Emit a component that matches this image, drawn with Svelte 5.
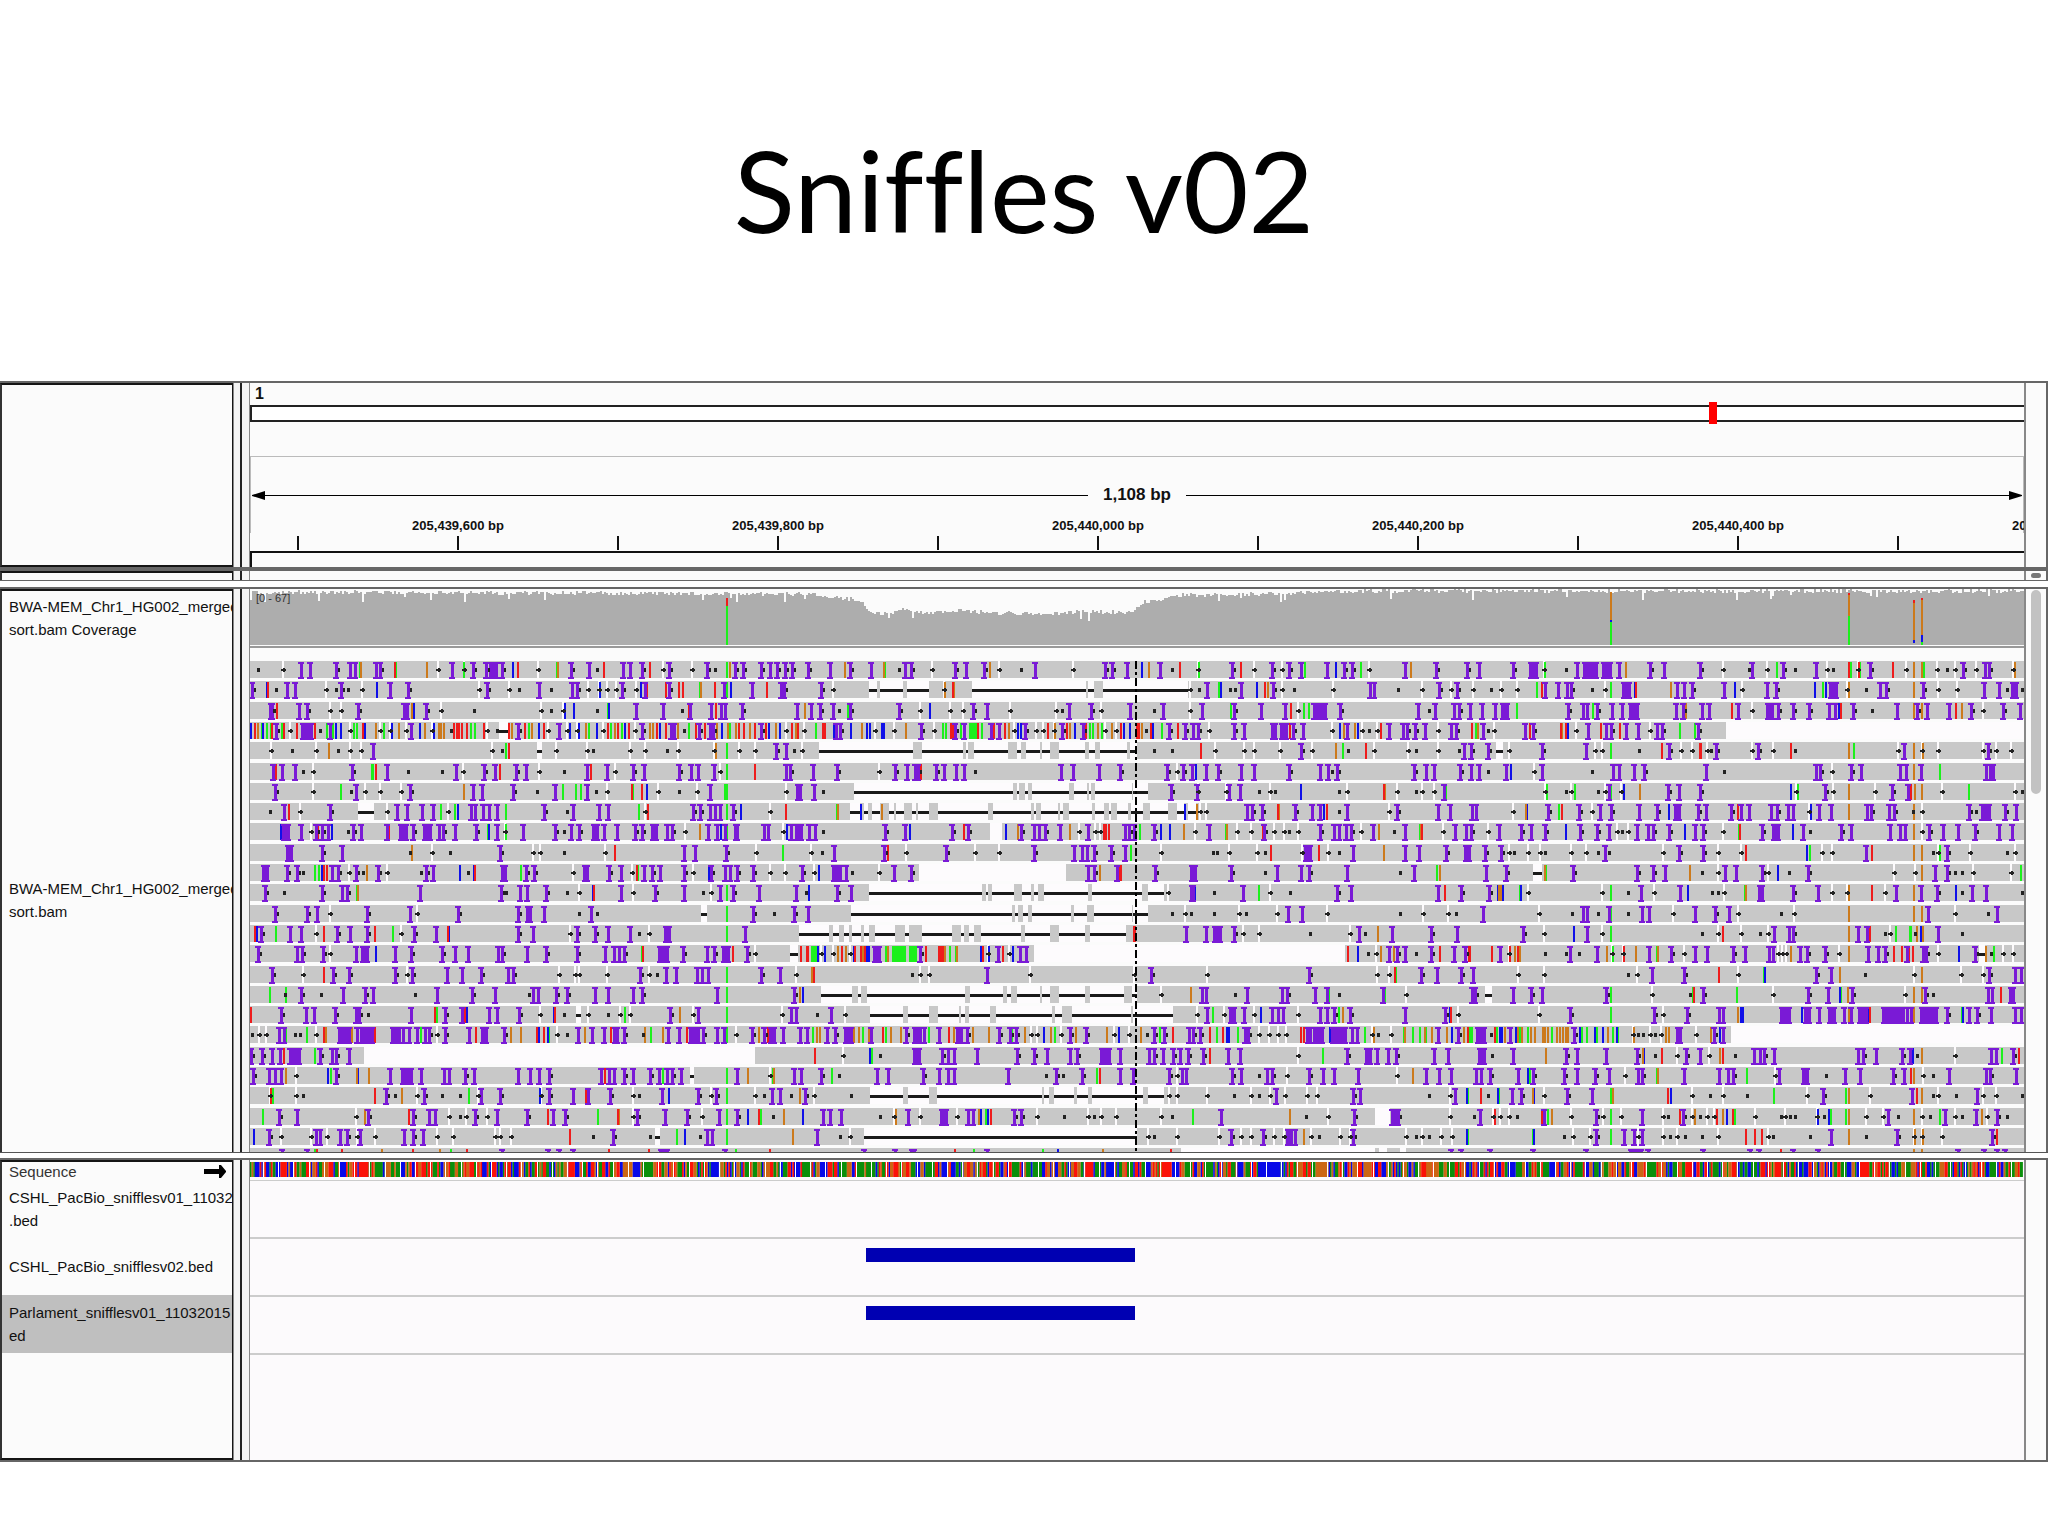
<script lang="ts">
	const WIDTH = 1774;
	const ROW_PITCH = 20.3;

	// One string per packed row of reads, positions in track units.
	// i insertion, f insertion next to a one base gap, b run of insertions, d dot,
	// m short deletion, l long deletion, e no read, a c g t mismatched base
	const rows = [
		'd8 m33 i51 i60 f86 i100 i105 a110 g111 i126 f130 t145 a146 g177 m188 i202 a214 m214 f223 f236 b240-247 f252 c263 t268 m288 a307 g308 f321 i339 d347 t354 i373 i380 f392 t400 m413 f419 m442 f457 d465 a477 g480 f485 f493 f511 i520 f527 f535 f542 f558 i580 g595 f600 i621 a635 g634 d649 i655 f661 m682 f705 i716 f734 g740 m749 d771 i785 m823 f855 f862 i877 c892 g899 i910 d922 t930 m948 a949 f982 t991 m1004 f1022 m1032 f1039 i1051 a1055 i1077 c1086 f1094 f1102 a1111 m1119 i1155 g1161 f1186 f1217 i1229 f1263 b1280-1287 m1294 a1295 d1316 i1327 b1334-1347 b1353-1361 i1369 g1376 f1400 i1414 f1450 m1473 d1499 i1502 m1517 a1527 f1533 d1545 i1566 m1577 d1583 t1599 a1601 m1608 t1609 a1610 f1620 t1643 m1656 g1664 g1672 a1674 m1687 d1697 m1705 f1713 m1726 i1735 f1739 m1763 g1765',
		'f2 c17 t18 d26 i37 i45 m76 d86 f91 d98 m112 c127 i140 f158 m229 f237 m259 d269 i289 d301 i322 f327 m338 c350 m349 m357 m366 f372 m386 c391 i395 t397 t416 f419 t429 t433 a450 g451 t465 i474 a477 c481 i502 t517 i531 f534 f571 m583 l619-627 l630-653 l657-679 m694 g695 t703 g704 l722-836 l838-844 l853-938 m940 d949 i957 a969 c971 d980 d985 i991 c1007 t1015 g1018 f1023 m1032 d1044 m1083 i1120 i1124 d1148 m1172 f1189 m1201 f1207 m1223 d1241 m1251 m1267 a1287 t1292 i1295 i1308 i1317 f1321 d1342 m1355 a1361 b1373-1380 c1385 t1386 g1421 i1427 i1434 f1442 i1474 c1485 m1492 i1517 f1526 c1565 a1573 c1576 b1580-1587 m1597 g1599 d1616 i1630 f1636 g1664 f1673 m1688 m1707 i1734 i1749 d1757 b1762-1767 d1772',
		'b20-23 d24 t27 i49 f57 m80 m91 f108 i154 i157 g162 c164 f176 m191 d224 m291 d301 m313 c315 c324 d347 a358 c359 i386 i413 d432 t439 i440 i461 t466 i471 i475 f492 i547 g555 i561 f570 i583 d589 a598 f600 f649 m670 c680 m700 m713 f723 i737 m760 m806 d812 i819 f841 m851 i880 d904 i913 m940 i952 a981 f984 i1011 i1035 t1041 m1048 a1054 a1059 i1064 b1067-1076 f1090 i1168 d1179 i1185 i1204 f1209 i1220 i1232 i1245 b1252-1258 a1267 f1318 i1333 i1337 a1343 f1347 i1362 i1372 b1380-1388 i1426 f1433 g1436 i1452 i1459 t1482 i1488 m1502 b1517-1523 f1528 f1543 f1559 i1579 i1585 c1589 t1591 f1603 d1622 i1647 g1664 f1667 g1672 i1677 i1699 t1706 g1712 f1721 m1733 f1753 i1770',
		'c1 t5 g8 a12 c13 a17 a21 t22 f26 a32 t34 m40 t47 b52-62 t65 d70 a77 i80 a83 c86 c91 m100 a104 a107 t113 c115 g126 m130 a134 m140 c142 g149 m156 i161 c170 g175 m182 c184 g189 g191 g194 d201 t204 t207 t209 t212 t217 a221 a225 t234 m237 d247 l249-258 t259 g262 f268 t275 a279 g282 c289 t294 m298 i309 m317 c320 m327 c329 g336 a339 c347 m353 t358 a361 g365 t368 a372 c375 t379 m385 f392 g400 g403 t407 c410 t416 i421 i424 g428 d434 a439 t446 f449 t455 i460 f463 g467 c472 g478 a480 g486 t489 t494 g500 t505 f511 t516 c519 g526 c530 m536 t542 g546 t548 m554 a566 t573 t575 c584 i586 f590 c601 g612 c617 c620 m625 c632 c634 m644 g656 f671 m684 a693 a696 t701 t703 f705 a711 i714 a720 a722 a724 a726 t728 a732 i741 t744 i749 t755 g759 m764 c768 c771 f775 m786 m793 t798 m804 g805 f812 t817 g820 c825 f833 t836 a840 a843 g848 m855 a852 g862 m866 t871 c874 c880 t887 t889 g892 d896 c903 t901 a912 f919 t928 f935 i943 f948 m959 f984 i994 b1022-1026 b1031-1037 t1040 f1043 i1053 m1082 c1090 g1094 i1097 g1105 c1108 m1112 d1119 m1127 t1131 i1139 i1153 f1157 f1165 i1175 m1188 i1201 f1206 t1222 a1226 g1228 i1233 d1238 m1244 i1275 t1280 f1283 t1311 g1312 t1316 c1318 m1326 i1338 t1351 i1356 f1361 a1362 t1370 i1376 i1388 m1400 i1407 f1412 a1430 a1445 f1448 e1476-1774',
		'm21 d42 m66 g79 d88 m100 m111 i123 m242 d252 a256 t259 l287-292 m306 m337 d343 m380 m395 d417 m428 m464 g466 a477 m489 m505 f526 i536 d544 m552 l569-663 l672-713 l716-718 l724-758 l767-771 l776-790 l792-800 l809-835 l839-845 l850-877 l880-887 d904 d922 t951 m965 m994 m1004 m1030 f1051 m1062 g1086 a1093 d1098 t1116 m1124 m1158 d1166 m1188 d1209 i1214 f1221 f1238 l1246-1253 m1259 f1292 i1336 m1345 m1352 a1361 d1389 t1412 f1419 m1431 m1442 t1450 t1451 m1457 d1461 f1466 m1502 f1508 m1523 t1541 d1545 g1599 a1604 m1648 i1654 g1664 m1672 g1673 m1688 m1733 f1738 m1746 m1761',
		'i23 t26 i32 i45 d53 m63 f102 a122 a123 t126 i137 d158 d192 i206 m213 f234 i245 t250 f266 i276 m289 d314 i337 t341 i357 m365 f383 i394 f429 i441 i448 i464 m470 a477 t505 i536 f540 i563 f587 m629 f645 i657 i665 f668 t671 f686 i694 i706 i714 d725 i811 i823 i849 f870 f917 m927 f933 i942 c946 i956 f968 i991 i1004 f1039 i1070 i1078 d1082 f1087 f1164 i1176 i1184 f1210 i1221 i1229 d1238 i1256 c1261 m1284 i1292 d1342 i1363 i1369 i1384 f1394 i1456 d1474 i1566 f1570 m1582 f1601 i1611 i1650 i1656 g1664 i1671 a1690 i1736 b1740-1744',
		'f25 m63 a91 d101 i106 m115 m130 m151 f160 g214 i223 i232 f263 d287 i305 a313 a326 a331 i337 a338 d346 m357 t382 a383 t392 c397 m408 d429 m447 i460 a475 a477 m536 b547-551 i564 d573 l604-763 l767-769 l775-778 l782-819 l824-837 l839-841 l845-882 l883-898 f921 i947 m948 m976 i979 i990 d1009 m1020 d1025 c1051 d1089 m1097 t1134 g1135 m1147 d1166 m1172 m1184 i1194 a1196 m1295 a1297 d1316 m1321 a1325 d1348 m1355 i1359 a1361 m1371 c1374 g1390 f1418 i1429 f1450 c1541 m1546 a1548 f1575 m1583 g1599 m1625 f1642 i1658 t1661 g1665 g1672 m1692 a1719 m1765 d1772',
		'd20 i34 t39 m50 f80 l108-124 m137 i147 i157 i172 i183 a191 m198 a205 c208 i221 i225 i233 i239 i247 a256 f294 d317 i323 i349 i358 a389 m395 t398 f443 f450 i460 i465 i470 a477 f483 c491 m520 t536 a587 g588 l600-610 c611 l614-618 l622-630 g632 l639-644 l646-654 l662-666 l668-679 l688-738 l743-781 l784-786 l791-808 l810-813 l819-842 l845-854 l859-861 l867-878 l881-893 l900-918 l927-934 c935 l938-946 g947 m950 m956 i997 f1002 f1012 t1028 g1029 f1045 i1062 i1070 c1074 t1077 d1089 i1097 m1139 f1147 i1188 i1200 i1222 i1226 m1263 g1276 c1277 f1298 a1309 t1312 f1329 m1342 i1350 f1361 i1389 f1407 c1419 b1425-1430 f1448 i1456 f1481 t1488 i1491 i1499 i1521 f1527 i1538 i1543 m1559 c1561 i1569 i1581 g1599 i1617 f1621 i1639 f1644 d1663 g1664 m1672 f1719 d1726 i1732 b1735-1740 f1755 i1766',
		'c31 b33-39 i51 m61 f66 t68 f72 i78 c82 d98 f103 i111 i137 t139 b150-157 f163 b174-181 i189 f193 i205 f226 a238 c239 i247 m255 a256 i273 f305 d314 i321 f329 b343-348 i354 i367 f385 f392 b402-407 i417 f422 m435 g450 i458 i467 c471 i475 a477 b485-488 i514 i518 m533 c537 i541 b546-552 i559 i565 d573 f635 i655 c660 f702 t714 f718 e740-752 c756 g768 f771 i784 i789 f795 i810 g820 m829 i838 m845 m850 t854 t856 t859 i875 f879 i884 a890 f904 c911 c920 g934 m945 i959 a976 g977 m987 m1001 t1013 f1014 m1024 m1034 d1039 m1048 f1070 i1084 i1089 i1096 f1101 m1111 i1123 g1129 d1144 i1155 a1170 g1171 t1172 m1193 i1205 i1216 f1221 m1238 i1249 f1271 i1281 f1295 c1316 f1330 f1347 i1359 m1367 d1372 m1378 i1387 i1398 f1403 f1419 c1435 i1445 f1453 m1473 a1489 t1490 f1512 b1523-1529 c1543 i1553 d1560 f1591 i1601 i1640 i1650 i1655 g1664 m1672 f1679 i1693 i1708 f1725 i1749 i1762',
		'b37-42 f72 i92 d160 g162 m182 d200 f250 m283 m290 d314 m355 t365 i434 i445 f476 m506 a533 m561 d572 i584 f634 t638 m656 f696 m725 m749 f784 i824 i832 i837 f844 f861 i875 a881 m911 d963 d967 m979 m1007 d1015 t1021 m1052 b1055-1061 t1069 m1078 d1089 i1103 g1134 i1155 i1169 f1196 b1215-1220 f1235 f1251 m1259 d1264 m1278 m1290 d1295 m1321 m1336 d1348 i1355 d1359 m1413 f1429 f1453 m1468 m1491 t1496 c1557 a1560 m1572 m1582 i1616 t1622 g1664 g1672 d1683 m1688 a1690 f1697 m1720 d1757 m1765',
		'b13-18 f37 f47 d53 a65 a69 c72 t74 t77 i82 f88 m99 f106 d113 g117 f128 m137 d171 f176 i183 c210 d218 c224 t225 b252-256 a271 f276 f284 m323 b334-338 f359 i371 m382 t387 a388 i394 f402 i410 f434 m443 c459 f461 i475 i480 f487 f503 m520 m535 f552 m564 c569 b583-591 i596 d602 m629 i644 f661 e669-816 i838 f844 g850 i867 t870 t871 f905 b941-946 f981 d1015 i1027 i1051 f1059 i1097 d1150 i1164 a1187 g1190 i1236 f1256 l1283-1292 g1295 a1296 f1323 f1387 f1403 i1415 g1440 d1452 m1468 i1475 i1486 f1512 m1518 c1528 d1539 f1558 m1644 m1665 g1672 i1685 f1697 d1705 d1712 m1723 m1761 a1771',
		'f15 d34 f72 i92 f97 a107 g108 i170 f251 d256 i270 i277 f296 d317 m329 c343 t344 i371 m383 f405 i434 d453 m461 i470 a477 f483 i509 i546 d556 c559 f587 i601 l619-732 l736-738 l742-764 l772-781 l784-788 l794-838 l842-892 l898-914 m918 b941-944 c945 d964 i993 a1009 m1020 d1040 f1087 i1101 i1188 t1195 f1211 f1239 c1248 g1249 g1251 c1253 a1270 c1271 m1278 m1352 a1361 d1378 i1391 m1404 i1430 c1438 d1462 d1468 m1474 a1495 g1496 b1509-1513 f1543 i1568 m1582 m1597 g1599 t1622 m1635 i1646 g1664 i1671 f1687 c1706 d1712 i1722 i1736 d1772',
		'f25 f57 i67 m80 f117 i160 m167 f208 f268 b277-281 i294 d329 i341 d347 l451-457 a477 f503 d524 f544 i558 l601-762 l765-768 l773-778 l782-821 l824-837 l844-882 l883-898 d922 m935 d941 d964 m989 d996 m1027 i1038 i1052 m1077 d1150 m1173 m1198 d1206 i1233 m1289 d1322 i1333 i1337 d1348 i1359 a1361 d1378 i1392 i1399 m1423 i1445 f1465 i1479 m1488 d1531 m1544 g1599 g1664 g1672 i1678 m1705 d1738 i1747',
		't5 c7 f11 a26 i40 i51 m66 t74 f87 i100 f117 t125 a143 m151 f164 i186 t198 c199 f268 i283 m320 f327 f345 i358 i380 d389 m399 b415-420 a477 i495 l549-579 l583-589 l594-599 l602-611 l614-619 l625-645 l655-659 l672-702 l711-714 l719-724 l731-771 l775-800 l809-835 l840-876 t884 t885 i936 i956 b964-971 f984 m993 m1009 d1060 m1100 i1109 d1115 g1128 i1142 f1181 i1207 f1273 m1294 c1324 i1337 m1352 a1361 d1452 m1468 t1473 m1491 d1510 m1518 i1524 i1539 f1543 g1599 i1608 i1617 t1620 d1635 m1640 a1646 a1660 a1661 d1665 g1667 c1671 g1673 i1688 d1712',
		'f8 i47 f52 f73 m80 i106 b112-118 c126 i145 f161 f192 i205 i218 i248 f252 i277 f296 f327 i355 i364 i369 f374 a392 t393 b409-418 f433 i457 f464 b473-479 t483 f497 m505 l540-548 t551 t557 t558 a562 a564 a566 c568 m571 c575 m583 g588 t592 g596 m600 c604 t605 t611 g613 t615 c617 c619 b624-630 a636 g638 a643 a645 a647 a649 a651 a653 a655 a660 a662 a664 a666 f670 t676 t689 t691 t693 g695 a700 a706 g707 c731 t733 m738 c739 i748 t753 m759 c763 i770 i776 e784-1095 t1098 c1108 d1118 m1126 g1131 i1139 g1144 f1147 i1155 d1166 f1181 t1190 i1204 f1215 t1219 t1220 t1242 i1250 t1260 m1259 g1265 t1268 g1270 d1295 d1316 i1320 d1329 i1347 g1357 m1362 a1363 m1373 t1374 g1386 i1399 a1407 g1408 f1421 m1434 i1445 i1457 f1483 i1495 i1519 i1523 m1528 m1532 m1536 g1541 i1550 f1557 f1575 m1589 g1599 i1618 i1628 f1635 t1644 t1652 i1657 t1659 t1663 i1673 f1676 m1688 c1709 f1725 l1729-1735 g1736 d1741 a1744 m1753 m1763',
		'f22 m53 t74 f83 f99 f145 m157 f162 i197 i212 f231 i258 f263 m309 m325 m329 m357 f390 m399 d407 i416 i426 i447 i452 i458 a477 f511 i530 m546 g562 t564 d662 m670 m679 i737 m780 m884 f901 m957 f1059 m1127 m1139 t1145 a1146 f1171 i1187 f1211 i1223 m1268 m1294 d1378 m1387 i1402 f1434 t1469 m1488 a1514 c1515 f1566 i1581 g1590 d1615 m1664 g1672 m1711 m1733 f1739 i1765 i1771',
		'a20 d35 a36 f51 d71 i93 f115 i123 d165 i187 f222 i245 d279 i283 i288 f306 f317 i345 i358 i383 f392 i467 a477 f544 g550 c553 l571-602 l608-611 l617-715 l720-753 l757-761 l767-790 l792-800 l809-835 l840-874 l882-887 m911 g941 i952 i956 d985 i997 i1032 f1037 i1065 i1077 a1079 d1089 i1133 a1135 m1156 i1222 f1225 l1235-1242 i1263 f1281 i1292 f1356 a1361 m1402 d1440 a1443 t1444 f1453 a1487 m1523 f1558 i1578 c1590 a1591 g1598 f1602 m1655 g1664 g1672 f1675 d1683 i1738 i1742 t1751 b1760-1764',
		't1 f31 i56 i64 f85 i106 f109 d118 i161 t185 a187 f195 i212 t215 c217 i239 i247 f269 m290 c304 t305 d314 l326-331 m338 d358 m370 a375 m380 f420 g430 m443 i448 a477 m532 i541 i546 d567 i581 m595 l620-653 l658-679 l688-709 l711-715 l719-740 l746-802 l805-812 l822-881 l883-923 m947 i957 a963 m974 b980-985 i994 m1004 c1011 i1022 i1028 i1033 m1048 i1070 i1077 f1084 a1089 g1093 f1100 i1155 f1195 c1200 t1201 m1208 m1289 f1320 a1361 f1404 m1413 f1437 i1469 i1473 g1488 c1491 c1493 b1531-1540 c1552 b1555-1560 i1569 b1579-1585 i1594 g1599 i1601 b1609-1617 c1619 t1620 b1633-1654 i1657 i1661 g1664 b1671-1687 f1697 a1712 c1713 i1719 f1727 i1741 i1765 i1771',
		'd2 m9 m16 i29 i34 a36 d45 d50 a57 m66 t74 g76 b89-100 g102 i107 b111-123 t125 b142-150 i153 i159 i167 a171 i175 f179 m187 f195 i219 t226 b232-237 f254 g261 g271 t287 c289 t294 c298 a299 m307 d317 i328 g335 i342 i354 t361 b364-368 f374 d393 g395 a401 g413 i418 i429 t437 b440-449 f453 i467 i474 a477 m486 f502 g509 f514 t518 b520-525 i533 i550 i557 a563 g567 g570 i577 f585 b595-602 g604 g609 a613 g619 i621 t633 a636 g641 g651 f656 b664-671 i674 a679 i689 t699 g704 b707-712 f717 g723 g739 f749 f760 a762 f766 g775 m781 m787 c794 g801 a805 m811 f820 g826 f836 g857 m864 c869 m879 g891 d897 f904 a910 f914 t923 i939 f943 f950 t960 a967 t973 c977 c979 a988 i995 f998 m1009 m1019 m1028 m1036 t1051 t1054 b1057-1061 b1064-1073 c1080 b1082-1096 i1102 i1107 a1115 m1122 g1124 d1128 m1141 a1154 g1155 a1163 a1170 g1175 a1176 g1182 i1188 g1197 c1202 f1208 g1214 t1218 a1220 a1222 b1227-1235 d1241 t1245 a1247 c1250 c1252 g1255 i1260 c1266 g1268 a1270 g1272 a1278 g1281 g1285 g1293 g1295 g1298 a1302 g1307 g1310 g1313 g1316 g1318 f1324 c1330 a1332 a1337 c1345 a1347 c1353 g1358 a1363 c1367 a1368 m1383 g1384 d1388 d1393 m1400 d1405 m1411 g1416 g1419 b1427-1431 m1446 g1461 f1464 c1470 i1473 e1481-1774',
		'f1 a2 f12 i22 i30 t34 i40 b43-50 a65 f70 i82 f86 i99 e114-505 t565 m593 c620 a622 d630 b664-670 f692 i698 i704 i727 f767 f784 i797 i820 f827 b851-860 i870 i899 f904 i913 f923 i930 f938 f953 t960 i978 i990 m1048 a1073 f1097 b1116-1121 i1127 i1138 f1146 i1184 i1198 b1229-1235 d1242 i1263 g1296 f1316 i1327 i1356 f1387 g1393 c1394 d1405 t1412 m1427 f1436 i1450 m1459 g1470 t1473 d1485 i1504 i1510 f1514 i1524 i1608 f1613 i1626 f1652 i1660 c1663 d1667 g1672 m1705 i1741 i1746 a1752 f1763 t1769',
		'f3 i19 i25 i31 g36 m46 c78 a81 f86 g107 c108 g119 i140 b152-162 i171 i194 i199 f215 i224 i268 i280 i289 f299 i351 t355 i359 i364 f374 i383 f400 i409 a413 i417 f422 i431 l440-444 a477 i487 g498 m520 a523 g524 i544 i551 f571 a582 d589 i627 i638 f673 i689 i698 i704 i758 d796 f806 d813 f832 a847 t850 i870 i883 f919 m927 i932 i936 f982 i991 d1009 i1017 f1022 m1037 f1059 i1073 i1084 i1108 m1147 g1163 i1176 i1189 i1201 i1226 i1231 f1240 i1268 c1278 a1280 f1283 f1314 i1327 f1345 i1359 m1375 i1388 f1392 a1407 g1408 i1434 i1469 i1478 f1483 a1497 m1525 i1529 b1553-1558 d1576 i1595 i1610 f1643 i1654 t1661 g1664 m1673 d1683 i1699 i1736 f1740 i1766',
		'm20 t21 a23 m46 d53 t125 f136 d145 g152 m167 f174 d192 d210 a219 m228 i231 f250 m291 c290 f299 i323 t336 i338 f360 m383 d389 i412 c419 f448 m461 f466 a477 m505 d514 i522 i530 d541 g550 f555 m564 d601 l620-653 l658-679 l687-792 l794-799 l804-824 l827-838 l842-893 l898-914 m919 m927 m957 d984 m1001 d1009 m1020 i1026 m1035 m1057 m1067 f1103 i1110 d1179 m1200 i1205 c1217 a1218 t1231 d1238 c1248 a1249 i1262 f1271 g1283 c1284 m1294 f1317 i1342 a1361 g1363 t1418 c1421 m1442 d1460 m1473 d1497 a1524 m1557 f1573 a1596 g1599 m1620 i1662 t1667 g1672 d1683 m1688 d1706 i1727 m1733 m1746 d1772',
		'a13 f29 i47 m106 g115 f118 t159 f163 i179 i185 m199 d210 m216 f225 m237 i247 f277 t298 i303 f315 a348 t368 g369 m383 f387 i415 f437 m452 i469 a477 f487 c498 t509 a511 d523 g534 c553 i573 i580 i591 d630 m644 g646 i658 m670 b691-697 m707 i718 i723 g729 c731 a736 c738 t741 f764 f771 m787 d814 m838 d844 m851 m866 m911 d922 a943 i971 g1040 d1056 m1078 f1104 e1125-1140 i1142 i1145 f1148 m1200 d1224 i1230 m1243 t1245 m1250 m1259 d1267 t1292 i1294 a1298 g1302 m1321 f1346 m1353 a1361 m1371 i1392 m1413 d1418 t1430 f1433 m1442 g1445 d1450 m1457 m1464 t1467 g1473 c1477 t1483 a1485 m1505 d1531 m1535 d1540 d1545 m1567 c1568 d1574 c1579 a1581 a1596 g1599 m1616 m1633 i1638 d1648 g1664 m1672 d1680 a1690 i1695 m1705 d1712 i1726 g1732 m1737 f1747 d1757',
		'c4 f19 m31 m61 i66 i70 m77 i90 f97 m107 i110 m125 i154 f163 i173 m187 m203 m245 m250 m261 t320 d343 f363 d400 l405-410 a427 c435 d450 i457 i462 a477 g543 i567 d590 m600 l614-887 m898 d904 m927 m969 f981 m991 m1001 f1013 m1024 m1034 b1037-1042 i1045 g1054 m1061 d1069 m1090 m1100 f1103 m1156 d1166 m1172 d1179 m1191 m1202 c1217 a1218 c1284 a1283 d1314 m1323 m1340 f1346 a1361 i1374 i1384 m1388 i1392 m1413 d1420 m1427 d1435 d1452 m1468 t1496 t1505 t1512 m1518 d1523 d1560 i1581 g1599 d1616 f1647 m1664 g1665 m1672 g1673 m1692 f1742 t1747',
		'i32 i57 a65 t67 t92 g132 t163 g190 a201 t217 i252 i298 i309 i323 t359 t399 b410-418 i475 a486 t520 i614 i645 b661-665 t705 a724 i737 a793 c808 g853 t921 e931-1125 e1129-1137 e1150-1156 i1201 i1211 i1240 i1283 i1336 b1380-1392 i1398 i1453 t1531 i1500 i1509 i1543 i1568 g1664 g1672 i1708 i1734 i1747 i1755'
	];

	const baseColors = { a: '#1cf01c', c: '#1010e8', g: '#cc7a1c', t: '#ee1c1c' };

	function parseRow(row: string, index: number) {
		const y = Math.round(index * ROW_PITCH);
		const out = { gap: '', empty: '', line: '', dots: '', ins: '', a: '', c: '', g: '', t: '', y };
		const box = (x: number, top: number, w: number, h: number) => `M${x} ${y + top}h${w}v${h}h${-w}z`;

		for (const token of row.split(' ')) {
			const kind = token[0];
			const [from, to] = token.slice(1).split('-').map(Number);

			if (kind === 'm') {
				out.gap += box(from - 1, 0, 2, 17);
				out.dots += box(from - 2, 8, 5, 2) + box(from, 7, 2, 4);
			} else if (kind === 'd') {
				out.dots += box(from - 1, 7, 3, 4);
			} else if (kind === 'l') {
				out.gap += box(from, 0, to - from, 17);
				out.line += box(from, 8, to - from, 3);
			} else if (kind === 'e') {
				out.empty += box(from, 0, to - from, 17);
			} else if (kind === 'b') {
				out.ins += box(from - 2, 1, to - from + 4, 2) + box(from - 1, 1, to - from + 2, 17) + box(from - 2, 16, to - from + 4, 2);
			} else if (kind === 'i' || kind === 'f') {
				out.ins += box(from - 3, 1, 6, 2) + box(from - 1, 1, 3, 17) + box(from - 3, 16, 6, 2);
				if (kind === 'f') out.dots += box(from + 2, 7, 2, 4);
			} else {
				out[kind as 'a' | 'c' | 'g' | 't'] += box(from - 1, 1, 2, 16);
			}
		}
		return out;
	}

	const reads = rows.map(parseRow);

	function randomizer(seed: number) {
		return () => {
			seed = (seed * 1664525 + 1013904223) % 4294967296;
			return seed / 4294967296;
		};
	}

	// mean depth, [position, distance from the top of the track]
	const depth = [
		[0, 1], [560, 3], [608, 9], [622, 22], [640, 23], [655, 17], [670, 22], [706, 19], [740, 22],
		[800, 23], [838, 20], [880, 22], [893, 11], [912, 9], [930, 4], [1010, 3], [1100, 0], [1774, 0]
	];

	function meanDepth(x: number) {
		const i = Math.max(1, depth.findIndex((p) => p[0] >= x));
		const [x0, y0] = depth[i - 1];
		const [x1, y1] = depth[i];
		return y0 + ((x - x0) / (x1 - x0)) * (y1 - y0);
	}

	function coveragePath() {
		const rnd = randomizer(41);
		let d = 'M0 56';
		for (let x = 0; x < WIDTH; x += 2) {
			let y = meanDepth(x) + rnd() * 4;
			if (rnd() > 0.96) y += 4 + rnd() * 6;
			d += `V${Math.round(y)}h2`;
		}
		return d + 'V56z';
	}

	const coverage = coveragePath();

	const variants = [
		{ x: 476, parts: [['t', 9, 8], ['a', 17, 39]] },
		{ x: 1360, parts: [['g', 3, 28], ['c', 31, 2], ['a', 33, 23]] },
		{ x: 1598, parts: [['t', 4, 2], ['g', 6, 21], ['a', 27, 29]] },
		{ x: 1663, parts: [['t', 11, 3], ['g', 14, 37], ['c', 51, 3]] },
		{ x: 1671, parts: [['t', 9, 2], ['g', 11, 35], ['c', 46, 7], ['a', 53, 3]] }
	] as const;

	const rnd = randomizer(7);
	const sequence = { a: '', c: '', g: '', t: '' };
	let base: 'a' | 'c' | 'g' | 't' = 'a';
	for (let i = 0; i < 1108; i++) {
		if (rnd() > 0.3) base = (['a', 'c', 'g', 't'] as const)[Math.floor(rnd() * 4)];
		sequence[base] += `M${(i * 1.6).toFixed(1)} 0h1.7v15h-1.7z`;
	}
	const sequenceColors = { a: '#0a8f0a', c: '#0808e8', g: '#cc6614', t: '#fb1208' };
	const sequenceGaps = Array.from({ length: 117 }, (_, i) => 13 + Math.round(i * 15.2));

	const ticks = Array.from({ length: 11 }, (_, i) => 48 + i * 160);
	const labels = [
		[208, '205,439,600 bp'],
		[528, '205,439,800 bp'],
		[848, '205,440,000 bp'],
		[1168, '205,440,200 bp'],
		[1488, '205,440,400 bp'],
		[1808, '205,440,600 bp']
	] as const;

	const pct = (x: number) => `${(x / WIDTH) * 100}%`;
</script>

<main>
	<h1>Sniffles v02</h1>

	<div class="browser">
		<section class="panel header">
			<div class="names"></div>
			<div class="gutter"></div>
			<div class="tracks">
				<div class="chrom">1</div>
				<div class="ideogram"><i style:left={pct(1459)}></i></div>
				<div class="span">
					<svg viewBox="0 0 14 9"><path d="M1 4L14 0V9L1 5z" /></svg>
					<hr />
					<b>1,108 bp</b>
					<hr />
					<svg viewBox="0 0 14 9"><path d="M13 4L0 0V9L13 5z" /></svg>
				</div>
				<svg class="ruler">
					{#each labels as [x, text]}
						<text x={pct(x)} y="15" text-anchor="middle">{text}</text>
					{/each}
					{#each ticks as x}
						<line x1={pct(x)} x2={pct(x)} y1="21" y2="35" />
					{/each}
				</svg>
				<div class="axis"></div>
			</div>
			<div class="scroll"></div>
		</section>

		<section class="panel strip">
			<div class="names"></div>
			<div class="gutter"></div>
			<div class="tracks"></div>
			<div class="scroll"><span class="knob"></span></div>
		</section>

		<section class="panel data">
			<div class="names">
				<p class="coverage-name">BWA-MEM_Chr1_HG002_merged<br />sort.bam Coverage</p>
				<p class="reads-name">BWA-MEM_Chr1_HG002_merged<br />sort.bam</p>
			</div>
			<div class="gutter"></div>
			<div class="tracks">
				<div class="coverage">
					<svg viewBox="0 0 {WIDTH} 57" preserveAspectRatio="none" shape-rendering="crispEdges">
						<path d={coverage} fill="#adadad" />
						{#each variants as v}
							{#each v.parts as [kind, y, h]}
								<rect x={v.x} {y} width="2" height={h} fill={baseColors[kind]} />
							{/each}
						{/each}
					</svg>
					<span>[0 - 67]</span>
				</div>
				<svg class="reads" viewBox="0 0 {WIDTH} 491" preserveAspectRatio="none" shape-rendering="crispEdges">
					{#each reads as r}
						<rect x="0" y={r.y} width={WIDTH} height="17" fill="#c8c8c8" />
						<path d={r.gap} fill="#fdfbfd" />
						<path d={r.empty} fill="#fdfbfd" />
						<path d={r.line} fill="#1a1a1a" />
						<path d={r.a} fill={baseColors.a} />
						<path d={r.c} fill={baseColors.c} />
						<path d={r.g} fill={baseColors.g} />
						<path d={r.t} fill={baseColors.t} />
						<path d={r.ins} fill="#7a1ad6" />
						<path d={r.dots} fill="#222" />
					{/each}
					<line x1="886" x2="886" y1="0" y2="491" stroke="#000" stroke-width="2" stroke-dasharray="8 3 3 3" />
				</svg>
			</div>
			<div class="scroll"><span class="thumb"></span></div>
		</section>

		<section class="panel features">
			<div class="names">
				<div class="seq-name">
					Sequence
					<svg viewBox="0 0 22 13"><path d="M0 4h15V0h2l5 6v1l-5 6h-2V9H0z" /></svg>
				</div>
				<p>CSHL_PacBio_snifflesv01_11032<br />.bed</p>
				<p>CSHL_PacBio_snifflesv02.bed</p>
				<p class="selected">Parlament_snifflesv01_11032015<br />ed</p>
			</div>
			<div class="gutter"></div>
			<div class="tracks">
				<svg class="sequence" viewBox="0 0 {WIDTH} 15" preserveAspectRatio="none">
					<path d={sequence.a} fill={sequenceColors.a} />
					<path d={sequence.c} fill={sequenceColors.c} />
					<path d={sequence.g} fill={sequenceColors.g} />
					<path d={sequence.t} fill={sequenceColors.t} />
					{#each sequenceGaps as x}
						<rect {x} y="0" width="1" height="15" fill="#fff" />
					{/each}
				</svg>
				<div class="feature"></div>
				<div class="feature"><i style:margin-left={pct(616)} style:width={pct(269)}></i></div>
				<div class="feature"><i style:margin-left={pct(616)} style:width={pct(269)}></i></div>
			</div>
			<div class="scroll"></div>
		</section>
	</div>
</main>

<style>
	:global(body) {
		margin: 0;
		background: #fff;
	}

	main {
		font-family: 'Liberation Sans', Arial, sans-serif;
		color: #111;
	}

	h1 {
		margin: 0;
		height: 381px;
		font-family: Lato, Calibri, sans-serif;
		font-size: 113px;
		font-weight: 400;
		font-variant-ligatures: none;
		line-height: 378px;
		text-align: center;
		color: #000;
	}

	.panel {
		display: grid;
		grid-template-columns: 233px 17px minmax(0, 1fr) 24px;
		box-sizing: border-box;
		border-top: 2px solid #666;
		background: #fbfbfb;
	}

	.names {
		box-sizing: border-box;
		border: 2px solid #151515;
		border-right-width: 1px;
		border-left-color: #333;
		overflow: hidden;
		font-size: 15px;
		line-height: 23px;
		white-space: nowrap;

		& p {
			margin: 0;
			padding-left: 7px;
		}
	}

	.gutter {
		background: linear-gradient(
			90deg,
			#888 0 1px,
			#f4f4f4 1px 7px,
			#222 7px 9px,
			#f4f4f4 9px 16px,
			#888 16px 17px
		);
	}

	.scroll {
		box-sizing: border-box;
		border-left: 2px solid #888;
		border-right: 2px solid #666;
		padding: 1px 4px;

		& span {
			display: block;
		}
	}

	.knob {
		height: 5px;
		margin: 1px 1px;
		border-radius: 5px;
		background: #777;
	}

	.thumb {
		height: 204px;
		margin: 0 1px;
		border-radius: 6px;
		background: #c2c2c2;
	}

	.tracks {
		overflow: hidden;

		& svg {
			display: block;
		}
	}

	.header {
		height: 186px;

		& .chrom {
			height: 22px;
			padding-left: 5px;
			font-size: 16px;
			font-weight: 700;
			line-height: 22px;
		}

		& .ideogram {
			position: relative;
			box-sizing: border-box;
			height: 17px;
			border: 2px solid #222;
			border-right: 0;
			background: #fff;

			& i {
				position: absolute;
				top: -5px;
				width: 8px;
				height: 22px;
				background: #f00;
			}
		}

		& .span {
			display: flex;
			align-items: center;
			box-sizing: border-box;
			height: 77px;
			margin-top: 34px;
			border: 1px solid #bbb;
			border-bottom: 0;
			font-size: 17px;

			& svg {
				width: 14px;
				height: 9px;
			}

			& hr {
				flex: 1;
				height: 1px;
				margin: 0;
				border: 0;
				background: #000;
			}

			& b {
				width: 98px;
				text-align: center;
			}
		}

		& .ruler {
			width: 100%;
			height: 36px;
			margin-top: -18px;
			font-size: 13px;
			font-weight: 700;

			& text {
				fill: #111;
			}

			& line {
				stroke: #111;
				stroke-width: 2px;
				shape-rendering: crispEdges;
			}
		}

		& .axis {
			box-sizing: border-box;
			height: 16px;
			border-top: 2px solid #111;
			border-left: 2px solid #111;
		}
	}

	.strip {
		height: 14px;
		border-top-width: 4px;
		border-bottom: 1px solid #666;

		& .names {
			border-bottom: 0;
		}
	}

	.data {
		height: 566px;
		margin-top: 6px;
		border-bottom: 1px solid #555;

		& .names {
			border-bottom: 0;
		}

		& .coverage-name {
			padding-top: 4px;
		}

		& .reads-name {
			padding-top: 236px;
		}

		& .coverage {
			position: relative;
			height: 57px;
			border-bottom: 2px solid #999;

			& svg {
				width: 100%;
				height: 57px;
			}

			& span {
				position: absolute;
				top: 3px;
				left: 6px;
				font-size: 11px;
				color: #333;
			}
		}

		& .reads {
			width: 100%;
			height: 491px;
			margin-top: 13px;
		}
	}

	.features {
		height: 304px;
		margin-top: 5px;
		border-bottom: 2px solid #666;

		& .seq-name {
			display: flex;
			align-items: center;
			justify-content: space-between;
			height: 18px;
			padding: 0 6px 0 7px;
			color: #333;

			& svg {
				width: 22px;
				height: 13px;
			}
		}

		& .names p {
			display: flex;
			flex-direction: column;
			justify-content: center;
			height: 58px;
		}

		& .names p:first-of-type {
			height: 57px;
		}

		& .selected {
			background: #bfbfbf;
		}

		& .tracks {
			background: #fcfafc;
		}

		& .sequence {
			width: 100%;
			height: 15px;
			padding: 2px 0 3px;
			border-bottom: 1px solid #ccc;
		}

		& .feature {
			box-sizing: border-box;
			height: 58px;
			padding-top: 9px;
			border-bottom: 2px solid #ccc;

			& i {
				display: block;
				height: 14px;
				background: #0000b2;
			}
		}
	}
</style>
